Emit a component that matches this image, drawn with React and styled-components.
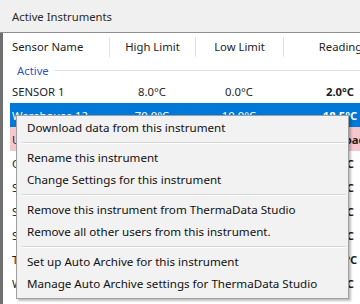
import React from 'react';
import styled, { createGlobalStyle } from 'styled-components';

const GlobalStyle = createGlobalStyle`
  html, body {
    margin: 0;
    padding: 0;
    background: #ffffff;
    overflow: hidden;
  }
  body {
    font-family: "Noto Sans", "Open Sans", sans-serif;
  }
`;

const sensors = [
  { name: 'Warehouse 12', high: '70.0°C', low: '10.0°C', reading: '18.5°C', state: 'selected' },
  { name: 'Utility Room', high: '8.0°C', low: '0.0°C', reading: 'Overload', state: 'alarm' },
  { name: 'Cold Room 2', high: '8.0°C', low: '0.0°C', reading: '4.1°C' },
  { name: 'SENSOR 2', high: '8.0°C', low: '0.0°C', reading: '3.2°C' },
  { name: 'SENSOR 3', high: '8.0°C', low: '0.0°C', reading: '2.9°C' },
  { name: 'SENSOR 4', high: '8.0°C', low: '0.0°C', reading: '5.6°C' },
  { name: 'Test Probe', high: '30.0°C', low: '0.0°C', reading: '21.4°C' },
  { name: 'Walk-in Fridge', high: '8.0°C', low: '0.0°C', reading: '3.8°C' },
  { name: 'Home Freezer', high: '5.0°C', low: '25.0°C', reading: '13.7°C' },
];

const menuGroups = [
  ['Download data from this instrument'],
  ['Rename this instrument', 'Change Settings for this instrument'],
  ['Remove this instrument from ThermaData Studio', 'Remove all other users from this instrument.'],
  ['Set up Auto Archive for this instrument', 'Manage Auto Archive settings for ThermaData Studio'],
];

function App() {
  return (
    <>
      <GlobalStyle />
      <Window>
        <TitleBar>Active Instruments</TitleBar>
        <Content>
          <HeaderRow>
            <HeaderCell align="left">Sensor Name</HeaderCell>
            <HeaderCell divider>High Limit</HeaderCell>
            <HeaderCell divider>Low Limit</HeaderCell>
            <HeaderCell divider>Reading</HeaderCell>
          </HeaderRow>
          <GroupLabel>
            <GroupText>Active</GroupText>
            <GroupLine />
          </GroupLabel>
          <Row>
            <NameCell>SENSOR 1</NameCell>
            <Cell>8.0°C</Cell>
            <Cell>0.0°C</Cell>
            <ReadingCell>2.0°C</ReadingCell>
          </Row>
          {sensors.map((s) => (
            <Row key={s.name} state={s.state}>
              <NameCell>{s.name}</NameCell>
              <Cell>{s.high}</Cell>
              <Cell>{s.low}</Cell>
              <ReadingCell>{s.reading}</ReadingCell>
            </Row>
          ))}
        </Content>

        <ContextMenu>
          {menuGroups.map((group, gi) => (
            <React.Fragment key={gi}>
              {gi > 0 && <Separator />}
              {group.map((label) => (
                <MenuItem key={label}>{label}</MenuItem>
              ))}
            </React.Fragment>
          ))}
        </ContextMenu>
      </Window>
    </>
  );
}

const Window = styled.div`
  position: relative;
  width: 360px;
  height: 304px;
  overflow: hidden;
  background: #ffffff;
  color: #1e1e1e;
  font-size: 11.3px;
`;

const TitleBar = styled.div`
  height: 32px;
  display: flex;
  align-items: center;
  padding-left: 12px;
  background: #f0f0f0;
  border-bottom: 1px solid #8f8f8f;
  color: #2a2a2a;
`;

const Content = styled.div`
  border-left: 3px solid #707070;
  padding-left: 7px;
  height: 271px;
`;

const columns = '99px 86px 88px 114px';

const HeaderRow = styled.div`
  display: grid;
  grid-template-columns: ${columns};
  height: 28px;
  align-items: center;
`;

const HeaderCell = styled.div`
  text-align: ${({ align }) => align || 'center'};
  padding-left: ${({ align }) => (align === 'left' ? '2px' : '0')};
  border-left: ${({ divider }) => (divider ? '1px solid #e3e3e3' : 'none')};
  height: 20px;
  line-height: 20px;
  white-space: nowrap;
`;

const GroupLabel = styled.div`
  display: flex;
  align-items: center;
  height: 18px;
  padding-left: 7px;
  gap: 5px;
`;

const GroupText = styled.span`
  color: #3556c2;
`;

const GroupLine = styled.div`
  flex: 1;
  height: 1px;
  background: #e2e2e2;
`;

const Row = styled.div`
  display: grid;
  grid-template-columns: ${columns};
  height: 24px;
  align-items: center;
  white-space: nowrap;
  background: ${({ state }) =>
    state === 'selected' ? '#0078d7' : state === 'alarm' ? '#f6c6cd' : 'transparent'};
  color: ${({ state }) => (state === 'selected' ? '#ffffff' : '#1e1e1e')};
`;

const Cell = styled.div`
  text-align: center;
  overflow: hidden;
`;

const NameCell = styled.div`
  padding-left: 2px;
  overflow: hidden;
`;

const ReadingCell = styled.div`
  text-align: center;
  font-weight: 700;
`;

const ContextMenu = styled.div`
  position: absolute;
  left: 16px;
  top: 115px;
  width: 331px;
  padding: 1px 0 3px;
  background: #f2f2f2;
  border: 1px solid #a0a0a0;
  box-shadow: 2px 2px 2px rgba(0, 0, 0, 0.25);
  color: #111111;
`;

const MenuItem = styled.div`
  height: 22px;
  line-height: 22px;
  padding-left: 10px;
  white-space: nowrap;
  font-size: 11.6px;
`;

const Separator = styled.div`
  height: 1px;
  margin: 3px 2px 3px 5px;
  background: #d4d4d4;
  border-bottom: 1px solid #ffffff;
`;

export default App;
